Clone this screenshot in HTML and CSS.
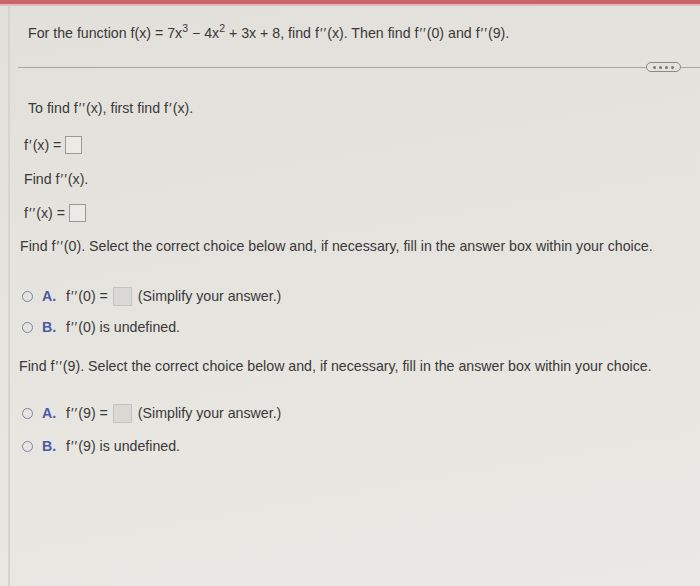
FILE: index.html
```html
<!DOCTYPE html>
<html>
<head>
<meta charset="utf-8">
<link rel="stylesheet" href="styles.css">
</head>
<body>
<div class="topbar"></div>
<div class="page">
  <div class="title">For the function f(x) = 7x<sup>3</sup> − 4x<sup>2</sup> + 3x + 8, find f<span class="pp">′′</span>(x). Then find f<span class="pp">′′</span>(0) and f<span class="pp">′′</span>(9).</div>
  <div class="divider">
    <span class="rule"></span>
    <span class="pill"><i></i><i></i><i></i><i></i></span>
    <span class="rule tail"></span>
  </div>
  <div class="line l1">To find f<span class="pp">′′</span>(x), first find f<span class="p1">′</span>(x).</div>
  <div class="line l2">f<span class="p1">′</span>(x) = <span class="box"></span></div>
  <div class="line l3">Find f<span class="pp">′′</span>(x).</div>
  <div class="line l4">f<span class="pp">′′</span>(x) = <span class="box"></span></div>
  <div class="line l5">Find f<span class="pp">′′</span>(0). Select the correct choice below and, if necessary, fill in the answer box within your choice.</div>
  <div class="choice c1"><span class="radio"></span><span class="letter">A.</span><span class="expr">f<span class="pp">′′</span>(0)&nbsp;= <span class="box gray"></span></span><span>(Simplify your answer.)</span></div>
  <div class="choice c2"><span class="radio"></span><span class="letter">B.</span><span class="expr">f<span class="pp">′′</span>(0) is undefined.</span></div>
  <div class="line l6">Find f<span class="pp">′′</span>(9). Select the correct choice below and, if necessary, fill in the answer box within your choice.</div>
  <div class="choice c3"><span class="radio"></span><span class="letter">A.</span><span class="expr">f<span class="pp">′′</span>(9)&nbsp;= <span class="box gray"></span></span><span>(Simplify your answer.)</span></div>
  <div class="choice c4"><span class="radio"></span><span class="letter">B.</span><span class="expr">f<span class="pp">′′</span>(9) is undefined.</span></div>
</div>
</body>
</html>
```
FILE: styles.css
```css
html, body {
  margin: 0;
  padding: 0;
  width: 700px;
  height: 586px;
  overflow: hidden;
}
body {
  background: linear-gradient(170deg, #e2e0db 0%, #e6e4df 50%, #ebe9e5 100%);
  font-family: "Liberation Sans", Arial, sans-serif;
  font-size: 14.2px;
  color: #393939;
}
.topbar {
  height: 4px;
  background: #c9646d;
  border-bottom: 2px solid #e6b9b6;
}
.page {
  margin-left: 8px;
  border-left: 2px solid #d6d4cf;
  height: 580px;
}
.title {
  padding: 17px 0 0 18px;
  line-height: 20px;
  height: 20px;
  white-space: nowrap;
}
sup {
  font-size: 10.5px;
  line-height: 0;
  vertical-align: 6px;
}
.pp {
  letter-spacing: 1px;
  margin-left: 1px;
}
.p1 {
  margin-left: 1px;
  margin-right: 1px;
}
.divider {
  display: flex;
  align-items: center;
  margin-top: 19px;
  padding-left: 8px;
  height: 10px;
}
.rule {
  flex: 1;
  height: 1px;
  background: #a9a7a3;
}
.rule.tail {
  flex: 0 0 19px;
}
.pill {
  width: 33px;
  height: 8px;
  border: 1px solid #8a8985;
  border-radius: 5px;
  display: flex;
  justify-content: center;
  align-items: center;
  gap: 3px;
}
.pill i {
  width: 3px;
  height: 3px;
  border-radius: 50%;
  background: #777;
}
.line {
  line-height: 20px;
  height: 20px;
  display: flex;
  align-items: center;
  white-space: nowrap;
}
.l1 { margin-top: 26px; padding-left: 18px; }
.l2 { margin-top: 17px; padding-left: 14px; }
.l3 { margin-top: 14px; padding-left: 14px; }
.l4 { margin-top: 14px; padding-left: 14px; }
.l5 { margin-top: 13px; padding-left: 10px; }
.l6 { margin-top: 19px; padding-left: 9px; }
.box {
  display: inline-block;
  width: 15px;
  height: 16px;
  border: 1px solid #9a9996;
  background: #eceae6;
  margin-left: 4px;
}
.box.gray {
  width: 17px;
  height: 17px;
  border: 1px solid #c4c3c0;
  background: #d9d8d5;
  margin-left: 5px;
  margin-right: 6px;
}
.choice {
  display: flex;
  align-items: center;
  height: 20px;
  padding-left: 12px;
  white-space: nowrap;
}
.c1 { margin-top: 30px; }
.c2 { margin-top: 11px; }
.c3 { margin-top: 27px; }
.c4 { margin-top: 13px; }
.radio {
  width: 9px;
  height: 9px;
  border: 1.5px solid #7a84a4;
  border-radius: 50%;
  margin-right: 9px;
}
.letter {
  color: #4b5aa3;
  font-weight: bold;
  width: 24px;
}
.expr {
  display: flex;
  align-items: center;
}
```
